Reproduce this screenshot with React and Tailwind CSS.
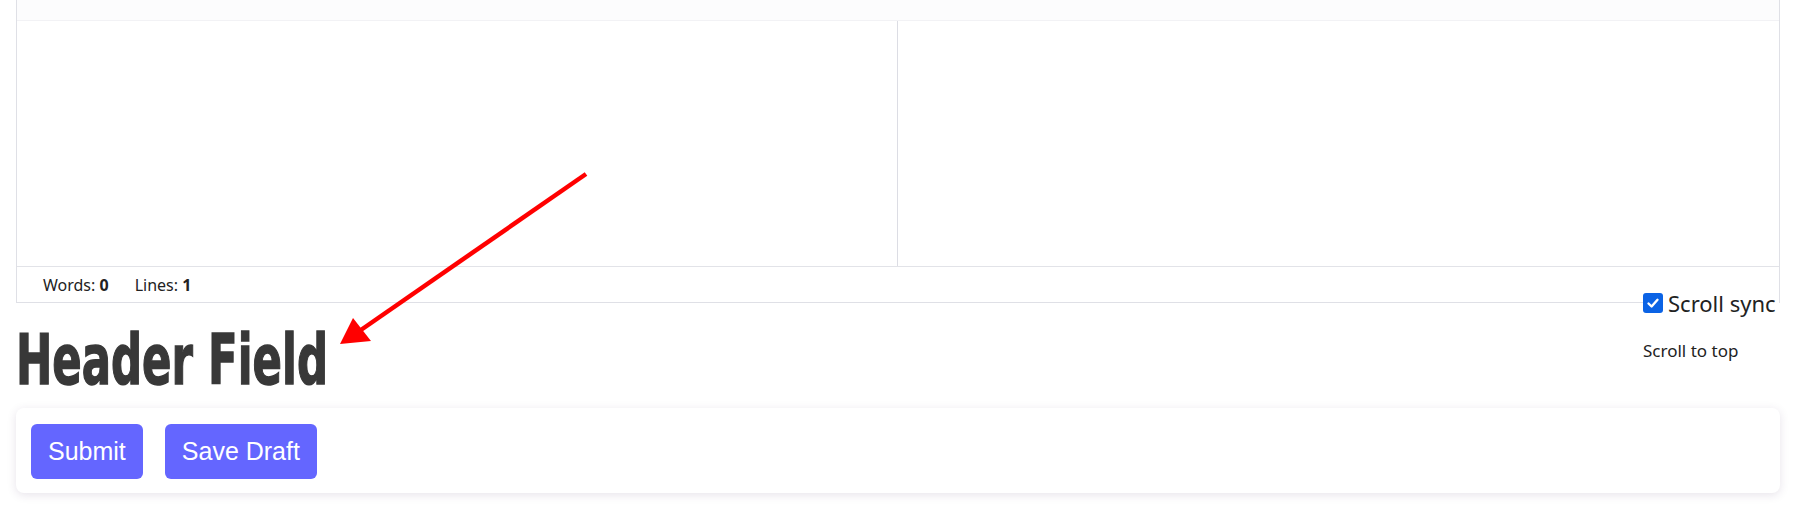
import React, { useState } from 'react';

const uiFont = { fontFamily: '"Noto Sans", "Open Sans", sans-serif' };

const Editor = () => (
  <div className="border-x border-b border-[#dfe0e6]" style={uiFont}>
    <div className="h-[21px] bg-[#fcfcfd] border-b border-[#f2f2f5]" />
    <div className="grid grid-cols-2 h-[245px]">
      <div className="border-r border-[#dcdde4]" />
      <div />
    </div>
    <div className="h-[36px] border-t border-[#e2e3e8] flex items-center pl-[26px] gap-[26px] text-[16px] text-[#222]">
      <span>
        Words: <b className="font-bold">0</b>
      </span>
      <span>
        Lines: <b className="font-bold">1</b>
      </span>
    </div>
  </div>
);

const ScrollControls = () => {
  const [sync, setSync] = useState(true);
  return (
    <div className="absolute left-[1643px] top-[288px] w-[136px] bg-white" style={uiFont}>
      <label className="flex items-center gap-[5px] h-[30px] cursor-pointer" onClick={() => setSync(!sync)}>
        <span className={`w-5 h-5 shrink-0 rounded-[3px] flex items-center justify-center ${sync ? 'bg-[#0b63e5]' : 'border border-gray-500 bg-white'}`}>
          {sync && (
            <svg width="14" height="14" viewBox="0 0 14 14" fill="none">
              <path d="M2.5 7.5 L5.6 10.5 L11.5 3.8" stroke="white" strokeWidth="2.4" strokeLinecap="round" strokeLinejoin="round" />
            </svg>
          )}
        </span>
        <span className="text-[22px] text-[#222] whitespace-nowrap leading-none">Scroll sync</span>
      </label>
      <div className="mt-[20px] text-[17px] text-[#222]">Scroll to top</div>
    </div>
  );
};

const Arrow = () => (
  <svg className="absolute left-0 top-0 pointer-events-none" width="1796" height="508">
    <line x1="586" y1="174" x2="358" y2="332" stroke="#ff0000" strokeWidth="4.5" />
    <polygon points="340,344 353,318 371,341" fill="#ff0000" />
  </svg>
);

export default function App() {
  return (
    <div className="relative min-h-screen bg-white px-4 overflow-hidden">
      <Editor />
      <h1
        className="mt-[22px] text-[70px] leading-[70px] font-bold text-[#383838] [-webkit-text-stroke:1.5px_#383838] origin-left scale-x-[0.62] whitespace-nowrap"
        style={{ fontFamily: '"DejaVu Sans", sans-serif' }}
      >
        Header Field
      </h1>
      <div className="mt-[13px] bg-white rounded-lg shadow-[0_2px_10px_rgba(70,40,90,0.13)] px-[15px] pt-4 pb-[14px] flex gap-[22px]">
        <button
          className="h-[55px] px-[17px] rounded-md bg-[#6466ff] text-white text-[25px]"
          style={{ fontFamily: '"Liberation Sans", Arial, sans-serif' }}
        >
          Submit
        </button>
        <button
          className="h-[55px] px-[17px] rounded-md bg-[#6466ff] text-white text-[25px]"
          style={{ fontFamily: '"Liberation Sans", Arial, sans-serif' }}
        >
          Save Draft
        </button>
      </div>
      <ScrollControls />
      <Arrow />
    </div>
  );
}
